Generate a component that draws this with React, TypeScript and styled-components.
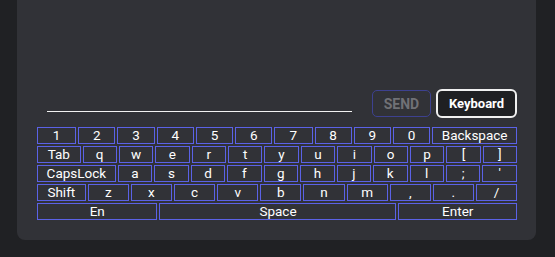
import styled, { createGlobalStyle } from 'styled-components'

const GlobalStyle = createGlobalStyle`
  html, body {
    margin: 0;
    padding: 0;
    background: #202124;
  }
  #root {
    height: 257px;
  }
`

type KeyDef = {
  label: string
  w: number
}

const k = (label: string, w: number): KeyDef => ({ label, w })

const rows: KeyDef[][] = [
  [
    k('1', 39), k('2', 37), k('3', 37), k('4', 37), k('5', 37), k('6', 37),
    k('7', 38), k('8', 37), k('9', 37), k('0', 37), k('Backspace', 87),
  ],
  [k('Tab', 44), ...'qwertyuiop[]'.split('').map((c) => k(c, 34.33))],
  [k('CapsLock', 81), ...["a", "s", "d", "f", "g", "h", "j", "k", "l", ";", "'"].map((c) => k(c, 34.27))],
  [k('Shift', 49), ...'zxcvbnm,./'.split('').map((c) => k(c, 41.1))],
  [k('En', 120), k('Space', 238), k('Enter', 118)],
]

export default function App() {
  return (
    <>
      <GlobalStyle />
      <Page>
        <Panel>
          <Messages />
          <Controls>
            <MessageInput type="text" />
            <SendButton disabled>SEND</SendButton>
            <KeyboardToggle>Keyboard</KeyboardToggle>
          </Controls>
          <Keyboard>
            {rows.map((row, i) => (
              <KeyRow key={i}>
                {row.map((key) => (
                  <Key key={key.label} $w={key.w}>
                    {key.label}
                  </Key>
                ))}
              </KeyRow>
            ))}
          </Keyboard>
        </Panel>
      </Page>
    </>
  )
}

const Page = styled.div`
  display: flex;
  height: 257px;
  padding: 0 19px 17px 17px;
  box-sizing: border-box;
`

const Panel = styled.div`
  width: 519px;
  height: 240px;
  box-sizing: border-box;
  background: #313237;
  border-radius: 0 0 8px 8px;
  padding: 0 19px 20px 20px;
  display: flex;
  flex-direction: column;
`

const Messages = styled.div`
  flex: 1;
`

const Controls = styled.div`
  display: flex;
  align-items: center;
  height: 29px;
  margin-bottom: 9px;
`

const MessageInput = styled.input`
  flex: 1;
  align-self: flex-end;
  margin: 0 20px 6px 10px;
  height: 18px;
  padding: 0;
  box-sizing: border-box;
  background: transparent;
  border: none;
  border-bottom: 1px solid #f2f2f2;
  outline: none;
  color: #ffffff;
  font-family: 'Liberation Sans', Arial, sans-serif;
  font-size: 13px;
`

const SendButton = styled.button`
  width: 59px;
  height: 27px;
  box-sizing: border-box;
  background: transparent;
  border: 1px solid #3d4190;
  border-radius: 5px;
  color: #707176;
  font-family: Roboto, 'Liberation Sans', sans-serif;
  font-weight: 700;
  font-size: 14px;
  padding: 0;
  margin-right: 5px;
`

const KeyboardToggle = styled.button`
  width: 81px;
  height: 29px;
  box-sizing: border-box;
  background: #1f2023;
  border: 2px solid #f0f0f0;
  border-radius: 6px;
  color: #ffffff;
  font-family: Roboto, 'Liberation Sans', sans-serif;
  font-weight: 700;
  font-size: 13px;
  padding: 0;
`

const Keyboard = styled.div`
  display: flex;
  flex-direction: column;
  gap: 2px;
`

const KeyRow = styled.div`
  display: flex;
  gap: 2px;
`

const Key = styled.div<{ $w: number }>`
  flex: ${(p) => p.$w} 1 0px;
  min-width: 0;
  height: 17px;
  box-sizing: border-box;
  border: 1px solid #5b62e6;
  background: #313237;
  color: #ffffff;
  font-family: Roboto, 'Liberation Sans', sans-serif;
  font-size: 13.5px;
  line-height: 15px;
  text-align: center;
  white-space: nowrap;
  overflow: hidden;
`
